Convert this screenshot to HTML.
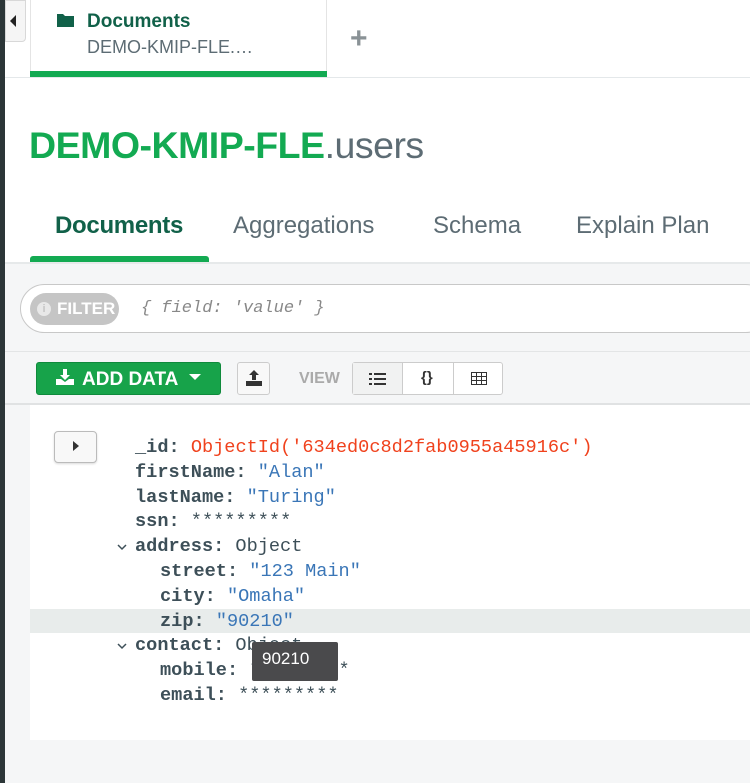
<!DOCTYPE html>
<html><head><style>
*{margin:0;padding:0;box-sizing:border-box}
body{width:750px;height:783px;overflow:hidden;background:#f5f6f7;font-family:"Liberation Sans",sans-serif;position:relative}
.a{position:absolute}
.mono{font-family:"Liberation Mono",monospace;font-size:18.6px;color:#3d4f58;white-space:pre;line-height:24.8px}
.k{font-weight:bold}
.s{color:#3a76b7}
</style></head><body>
<div class="a" style="left:0;top:0;width:750px;height:262px;background:#fff"></div>
<div class="a" style="left:0;top:0;width:5px;height:783px;background:#2c3638"></div>
<div class="a" style="left:5px;top:0;width:21px;height:42px;background:#f5f5f5;border:1px solid #d8d8d8;border-radius:0 0 4px 0"></div>
<div class="a" style="left:10px;top:15px;width:0;height:0;border-top:6px solid transparent;border-bottom:6px solid transparent;border-right:6px solid #222"></div>
<div class="a" style="left:30px;top:0;width:297px;height:77px;border-left:1px solid #e4e4e4;border-right:1px solid #e4e4e4"></div>
<div class="a" style="left:30px;top:71px;width:297px;height:6px;background:#13aa52"></div>
<div class="a" style="left:5px;top:77px;width:745px;height:1px;background:#e4e8ea"></div>
<svg class="a" style="left:57px;top:13px" width="17" height="14"><path d="M0 1h6l2 2h9v11H0z" fill="#116149"/></svg>
<div class="a" style="left:87px;top:11px;font-size:19px;font-weight:bold;color:#116149">Documents</div>
<div class="a" style="left:87px;top:37px;font-size:18px;color:#5d6c74">DEMO-KMIP-FLE.…</div>
<div class="a" style="left:350px;top:22px;font-size:30px;font-weight:bold;color:#8a9296">+</div>
<div class="a" style="left:29px;top:124px;font-size:37.5px;letter-spacing:-0.5px"><span style="color:#13aa52;font-weight:bold">DEMO-KMIP-FLE</span><span style="color:#5d6c74">.users</span></div>
<div class="a" style="left:55px;top:212px;font-size:24px;color:#116149;font-weight:bold;letter-spacing:-0.3px">Documents</div>
<div class="a" style="left:233px;top:212px;font-size:24px;color:#5d6c74">Aggregations</div>
<div class="a" style="left:433px;top:212px;font-size:24px;color:#5d6c74">Schema</div>
<div class="a" style="left:576px;top:212px;font-size:24px;color:#5d6c74">Explain Plan</div>
<div class="a" style="left:30px;top:256px;width:179px;height:7px;background:#13aa52;border-radius:3px 3px 0 0"></div>
<div class="a" style="left:5px;top:262px;width:745px;height:2px;background:#e6e9ea"></div>
<div class="a" style="left:20px;top:284px;width:750px;height:49px;background:#fff;border:1px solid #c8c8c8;border-radius:25px"></div>
<div class="a" style="left:30px;top:293px;width:89px;height:32px;background:#c5c5c5;border-radius:16px"></div>
<div class="a" style="left:37px;top:302px;width:14px;height:14px;border-radius:50%;background:#e8e8e8;color:#c5c5c5;font-size:11px;font-weight:bold;text-align:center;line-height:14px">i</div>
<div class="a" style="left:57px;top:299px;font-size:17px;font-weight:bold;color:#fff">FILTER</div>
<div class="a mono" style="left:141px;top:297px;font-size:17px;font-style:italic;color:#888">{ field: 'value' }</div>
<div class="a" style="left:5px;top:351px;width:745px;height:1px;background:#e3e5e6"></div>
<div class="a" style="left:36px;top:362px;width:185px;height:33px;background:#17a34a;border:1px solid #0f8a3c;border-radius:3px"></div>
<svg class="a" style="left:56px;top:368px" width="18" height="18"><path d="M7 1h4v6h3l-5 5-5-5h3z M0 11h5l4 3 4-3h5v6H0z" fill="#fff"/></svg>
<div class="a" style="left:82px;top:369px;font-size:19px;font-weight:bold;color:#fff">ADD DATA</div>
<div class="a" style="left:189px;top:374px;border-left:6px solid transparent;border-right:6px solid transparent;border-top:6px solid #fff"></div>
<div class="a" style="left:237px;top:362px;width:33px;height:33px;background:#f8f8f8;border:1px solid #ccc;border-radius:3px"></div>
<svg class="a" style="left:245px;top:369px" width="18" height="18"><path d="M9 1l5 5h-3v5H7V6H4z M1 12h16v5H1z" fill="#333"/></svg>
<div class="a" style="left:299px;top:370px;font-size:16px;font-weight:bold;color:#aaa">VIEW</div>
<div class="a" style="left:352px;top:362px;width:151px;height:33px;background:#fff;border:1px solid #ccc;border-radius:3px"></div>
<div class="a" style="left:353px;top:363px;width:50px;height:31px;background:#f1f2f2;border-right:1px solid #ccc"></div>
<div class="a" style="left:453px;top:363px;width:1px;height:31px;background:#ccc"></div>
<svg class="a" style="left:369px;top:372px" width="18" height="14"><path d="M0 1h3v2H0zM5 1h12v2H5zM0 6h3v2H0zM5 6h12v2H5zM0 11h3v2H0zM5 11h12v2H5z" fill="#333"/></svg>
<div class="a" style="left:421px;top:369px;font-size:15px;font-weight:bold;color:#333">{}</div>
<svg class="a" style="left:471px;top:372px" width="16" height="13"><path d="M0.5 0.5h15v12H0.5zM0.5 4.5h15M0.5 8.5h15M5.5 0.5v12M10.5 0.5v12" fill="none" stroke="#333"/></svg>
<div class="a" style="left:5px;top:403px;width:745px;height:2px;background:#e0e2e3"></div>
<div class="a" style="left:30px;top:405px;width:720px;height:335px;background:#fff"></div>
<div class="a" style="left:54px;top:431px;width:43px;height:32px;background:#f8f8f8;border:1px solid #bbb;border-radius:4px;box-shadow:0 1px 2px rgba(0,0,0,.15)"></div>
<div class="a" style="left:73px;top:441px;border-top:5px solid transparent;border-bottom:5px solid transparent;border-left:6px solid #333"></div>
<div class="a" style="left:30px;top:609px;width:720px;height:24px;background:#e8eceb"></div>
<div class="a mono" style="left:135px;top:436px"><span class="k">_id:</span> <span style="color:#f0421d">ObjectId('634ed0c8d2fab0955a45916c')</span>
<span class="k">firstName:</span> <span class="s">"Alan"</span>
<span class="k">lastName:</span> <span class="s">"Turing"</span>
<span class="k">ssn:</span> *********
<span class="k">address:</span> Object</div>
<div class="a mono" style="left:160px;top:560px"><span class="k">street:</span> <span class="s">"123 Main"</span>
<span class="k">city:</span> <span class="s">"Omaha"</span>
<span class="k">zip:</span> <span class="s">"90210"</span></div>
<div class="a mono" style="left:135px;top:634px"><span class="k">contact:</span> Object</div>
<div class="a mono" style="left:160px;top:659px"><span class="k">mobile:</span> *********
<span class="k">email:</span> *********</div>
<svg class="a" style="left:117px;top:543px" width="10" height="8"><path d="M1 2l4 4 4-4" fill="none" stroke="#3d4f58" stroke-width="1.5"/></svg>
<svg class="a" style="left:117px;top:642px" width="10" height="8"><path d="M1 2l4 4 4-4" fill="none" stroke="#3d4f58" stroke-width="1.5"/></svg>
<div class="a" style="left:252px;top:642px;width:86px;height:39px;background:#4a4a4c;border-radius:2px"></div>
<div class="a" style="left:262px;top:649px;font-size:17px;color:#fff">90210</div>
</body></html>
